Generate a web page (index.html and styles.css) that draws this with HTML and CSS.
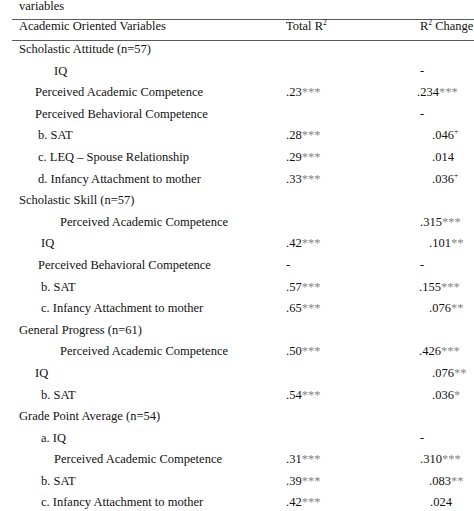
FILE: index.html
```html
<!DOCTYPE html>
<html>
<head>
<meta charset="utf-8">
<link rel="stylesheet" href="styles.css">
</head>
<body>
<div class="page">
  <div class="caption">variables</div>
  <div class="table">
    <div class="row head">
      <div class="lab">Academic Oriented Variables</div>
      <div class="c2">Total R<sup>2</sup></div>
      <div class="c3">R<sup>2</sup> Change</div>
    </div>
    <div class="body">
      <div class="row"><div class="lab">Scholastic Attitude (n=57)</div><div class="c2"></div><div class="c3"></div></div>
      <div class="row"><div class="lab i54">IQ</div><div class="c2"></div><div class="c3 o3">-</div></div>
      <div class="row"><div class="lab i35">Perceived Academic Competence</div><div class="c2">.23<span class="st">***</span></div><div class="c3 o0">.234<span class="st">***</span></div></div>
      <div class="row"><div class="lab i35">Perceived Behavioral Competence</div><div class="c2"></div><div class="c3 o3">-</div></div>
      <div class="row"><div class="lab i38">b. SAT</div><div class="c2">.28<span class="st">***</span></div><div class="c3 o15">.046<sup>+</sup></div></div>
      <div class="row"><div class="lab i38">c. LEQ – Spouse Relationship</div><div class="c2">.29<span class="st">***</span></div><div class="c3 o15">.014</div></div>
      <div class="row"><div class="lab i38">d. Infancy Attachment to mother</div><div class="c2">.33<span class="st">***</span></div><div class="c3 o15">.036<sup>+</sup></div></div>
      <div class="row"><div class="lab">Scholastic Skill (n=57)</div><div class="c2"></div><div class="c3"></div></div>
      <div class="row"><div class="lab i60">Perceived Academic Competence</div><div class="c2"></div><div class="c3 o3">.315<span class="st">***</span></div></div>
      <div class="row"><div class="lab i41">IQ</div><div class="c2">.42<span class="st">***</span></div><div class="c3 o12">.101<span class="st">**</span></div></div>
      <div class="row"><div class="lab i38">Perceived Behavioral Competence</div><div class="c2">-</div><div class="c3 o3">-</div></div>
      <div class="row"><div class="lab i41">b. SAT</div><div class="c2">.57<span class="st">***</span></div><div class="c3 o2">.155<span class="st">***</span></div></div>
      <div class="row"><div class="lab i41">c. Infancy Attachment to mother</div><div class="c2">.65<span class="st">***</span></div><div class="c3 o12">.076<span class="st">**</span></div></div>
      <div class="row"><div class="lab">General Progress (n=61)</div><div class="c2"></div><div class="c3"></div></div>
      <div class="row"><div class="lab i60">Perceived Academic Competence</div><div class="c2">.50<span class="st">***</span></div><div class="c3 o2">.426<span class="st">***</span></div></div>
      <div class="row"><div class="lab i35">IQ</div><div class="c2"></div><div class="c3 o15">.076<span class="st">**</span></div></div>
      <div class="row"><div class="lab i41">b. SAT</div><div class="c2">.54<span class="st">***</span></div><div class="c3 o15">.036<span class="st">*</span></div></div>
      <div class="row"><div class="lab">Grade Point Average (n=54)</div><div class="c2"></div><div class="c3"></div></div>
      <div class="row"><div class="lab i41">a. IQ</div><div class="c2"></div><div class="c3 o3">-</div></div>
      <div class="row"><div class="lab i54">Perceived Academic Competence</div><div class="c2">.31<span class="st">***</span></div><div class="c3 o3">.310<span class="st">***</span></div></div>
      <div class="row"><div class="lab i41">b. SAT</div><div class="c2">.39<span class="st">***</span></div><div class="c3 o12">.083<span class="st">**</span></div></div>
      <div class="row"><div class="lab i41">c. Infancy Attachment to mother</div><div class="c2">.42<span class="st">***</span></div><div class="c3 o13">.024</div></div>
    </div>
  </div>
</div>
</body>
</html>
```

FILE: styles.css
```css
html, body {
  margin: 0;
  padding: 0;
  background: #fff;
  overflow: hidden;
}
.page {
  width: 474px;
  height: 511px;
  overflow: hidden;
  font-family: "Liberation Serif", "Times New Roman", serif;
  font-size: 12.5px;
  color: #111;
}
.caption {
  padding-left: 19px;
  line-height: 12px;
  height: 12px;
  margin-bottom: 7px;
  white-space: nowrap;
}
.table {
  margin-left: 12px;
  width: 520px;
}
.row {
  display: grid;
  grid-template-columns: 274px 131px 1fr;
  height: 21.6px;
  line-height: 17px;
  white-space: nowrap;
}
.row.head {
  border-top: 1.5px solid #5a5a5a;
  border-bottom: 1.5px solid #5a5a5a;
  height: 20px;
  line-height: 13px;
}
.lab { padding-left: 7px; }
.i35 { padding-left: 23px; }
.i38 { padding-left: 26px; }
.i41 { padding-left: 29px; }
.i54 { padding-left: 42px; }
.i60 { padding-left: 48px; }
.c2 { padding-left: 0; }
.c3 { padding-left: 3px; }
.o0 { padding-left: 0; }
.o2 { padding-left: 2px; }
.o3 { padding-left: 3px; }
.o12 { padding-left: 12px; }
.o13 { padding-left: 13px; }
.o15 { padding-left: 15px; }
.st { color: #858585; }
sup {
  font-size: 7.5px;
  line-height: 0;
  vertical-align: 5px;
}
```
